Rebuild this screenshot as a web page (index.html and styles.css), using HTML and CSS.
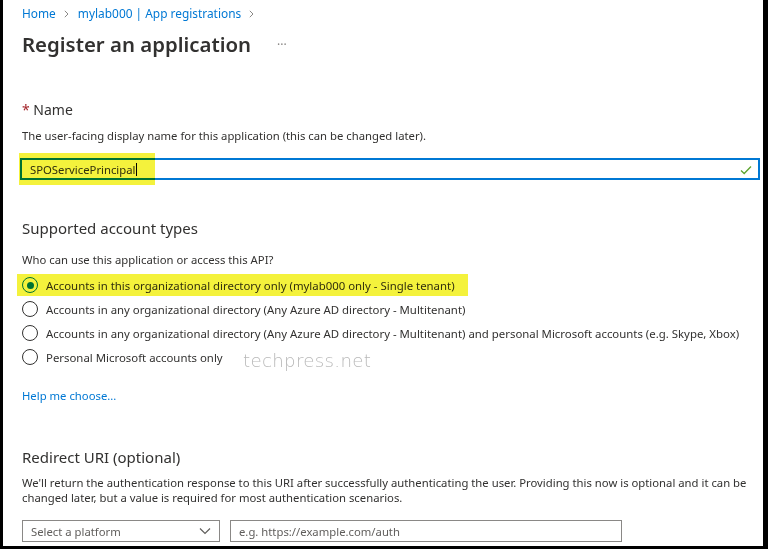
FILE: index.html
```html
<!DOCTYPE html>
<html lang="en">
<head>
    <meta charset="UTF-8">
    <meta name="viewport" content="width=device-width, initial-scale=1.0">
    <title>Register an application</title>
    <link rel="stylesheet" href="styles.css">
</head>
<body>
    <div class="frame">
        <div class="page">
            <div class="breadcrumb">
                <a href="#">Home</a>
                <svg class="sep" width="5" height="8" viewBox="0 0 5 8"><path d="M0.8 0.8 L4 4 L0.8 7.2" fill="none" stroke="#8a8886" stroke-width="1"/></svg>
                <a href="#">mylab000 | App registrations</a>
                <svg class="sep" width="5" height="8" viewBox="0 0 5 8"><path d="M0.8 0.8 L4 4 L0.8 7.2" fill="none" stroke="#8a8886" stroke-width="1"/></svg>
            </div>

            <div class="title-row">
                <h1>Register an application</h1>
                <span class="more">&middot;&middot;&middot;</span>
            </div>

            <label class="field-label"><span class="req">*</span> Name</label>
            <p class="desc">The user-facing display name for this application (this can be changed later).</p>
            <div class="name-input">
                <span class="value">SPOServicePrincipal</span><span class="caret"></span>
                <svg class="check" width="12" height="10" viewBox="0 0 12 10">
                    <path d="M1 5.5 L4.2 8.5 L11 1.5" fill="none" stroke="#5ea52e" stroke-width="1.3"/>
                </svg>
                <span class="mark mark-name"></span>
            </div>

            <h2>Supported account types</h2>
            <p class="desc who">Who can use this application or access this API?</p>
            <ul class="radios">
                <li class="checked">
                    <span class="radio"></span>
                    Accounts in this organizational directory only (mylab000 only - Single tenant)
                    <span class="mark mark-radio"></span>
                </li>
                <li><span class="radio"></span>Accounts in any organizational directory (Any Azure AD directory - Multitenant)</li>
                <li><span class="radio"></span>Accounts in any organizational directory (Any Azure AD directory - Multitenant) and personal Microsoft accounts (e.g. Skype, Xbox)</li>
                <li><span class="radio"></span>Personal Microsoft accounts only</li>
            </ul>
            <span class="watermark">techpress.net</span>

            <a class="help" href="#">Help me choose...</a>

            <h2 class="redirect">Redirect URI (optional)</h2>
            <p class="desc para">We'll return the authentication response to this URI after successfully authenticating the user. Providing this now is optional and it can be changed later, but a value is required for most authentication scenarios.</p>

            <div class="uri-row">
                <div class="select">
                    <span>Select a platform</span>
                    <svg width="12" height="8" viewBox="0 0 12 8">
                        <path d="M1 1.5 L6 6.5 L11 1.5" fill="none" stroke="#605e5c" stroke-width="1.2"/>
                    </svg>
                </div>
                <div class="uri-input">e.g. https://example.com/auth</div>
            </div>
        </div>
    </div>
</body>
</html>
```
FILE: styles.css
```css
html, body {
    margin: 0;
    height: 100%;
    background-color: #000;
}
body {
    font-family: "Noto Sans", "Open Sans", Arial, sans-serif;
    color: #323130;
}
.frame {
    height: 546px;
    padding-left: 3px;
    padding-right: 5px;
}
.page {
    position: relative;
    height: 100%;
    background-color: #fff;
    padding-left: 19px;
    padding-right: 3px;
    box-sizing: border-box;
    overflow: hidden;
}
a {
    color: #0078d4;
    text-decoration: none;
}
.breadcrumb {
    padding-top: 4px;
    font-size: 11.9px;
    line-height: 18px;
    height: 18px;
    display: flex;
    align-items: center;
}
.breadcrumb .sep {
    margin: 1px 9px 0 8px;
}
.title-row {
    margin-top: 7px;
    display: flex;
    align-items: center;
    height: 30px;
}
h1 {
    margin: 0;
    font-size: 20.4px;
    font-weight: 600;
    line-height: 30px;
}
.more {
    margin-left: 26px;
    color: #8a8886;
    font-size: 12px;
}
.field-label {
    display: block;
    margin-top: 41px;
    font-size: 14px;
    line-height: 20px;
}
.req {
    color: #a4262c;
}
.desc {
    margin: 8px 0 0;
    font-size: 11.3px;
    line-height: 16px;
}
.name-input {
    position: relative;
    margin-top: 14px;
    margin-left: -2px;
    height: 22px;
    border: 2px solid #0078d4;
    box-sizing: border-box;
    display: flex;
    align-items: center;
    padding-left: 8px;
    font-size: 11.3px;
}
.caret {
    width: 1px;
    height: 13px;
    background-color: #000;
    margin-left: 1px;
}
.check {
    position: absolute;
    right: 6px;
    top: 5px;
}
.mark {
    position: absolute;
    background-color: #f4f23c;
    mix-blend-mode: multiply;
}
.mark-name {
    left: -3px;
    top: -7px;
    width: 136px;
    height: 32px;
}
h2 {
    margin: 37px 0 0;
    font-size: 15px;
    font-weight: 400;
    line-height: 22px;
}
.who {
    margin-top: 13px;
}
.radios {
    list-style: none;
    margin: 5px 0 0;
    padding: 0;
}
.radios li {
    position: relative;
    height: 24px;
    display: flex;
    align-items: center;
    font-size: 11.4px;
    white-space: nowrap;
}
.radio {
    width: 16px;
    height: 16px;
    border: 1px solid #323130;
    border-radius: 50%;
    box-sizing: border-box;
    margin: 0 8px 0 0;
    flex-shrink: 0;
    position: relative;
}
.checked .radio {
    border-color: #0078d4;
}
.checked .radio::after {
    content: "";
    position: absolute;
    left: 3.5px;
    top: 3.5px;
    width: 7px;
    height: 7px;
    border-radius: 50%;
    background-color: #0078d4;
}
.mark-radio {
    left: -5px;
    top: 1px;
    width: 451px;
    height: 22px;
}
.watermark {
    position: absolute;
    left: 240px;
    top: 350px;
    font-size: 18.2px;
    letter-spacing: 0.3px;
    color: #b9b9b9;
    font-family: "DejaVu Sans", sans-serif;
    font-weight: 200;
}
.help {
    display: block;
    margin-top: 19px;
    font-size: 11.3px;
    line-height: 16px;
}
h2.redirect {
    margin-top: 42px;
}
.para {
    margin-top: 7px;
    line-height: 15px;
    width: 735px;
}
.uri-row {
    display: flex;
    gap: 10px;
    margin-top: 15px;
}
.select, .uri-input {
    height: 22px;
    border: 1px solid #8a8886;
    box-sizing: border-box;
    font-size: 11.3px;
    color: #605e5c;
    display: flex;
    align-items: center;
    padding: 0 8px;
}
.select {
    width: 198px;
    justify-content: space-between;
}
.uri-input {
    width: 392px;
}
```
